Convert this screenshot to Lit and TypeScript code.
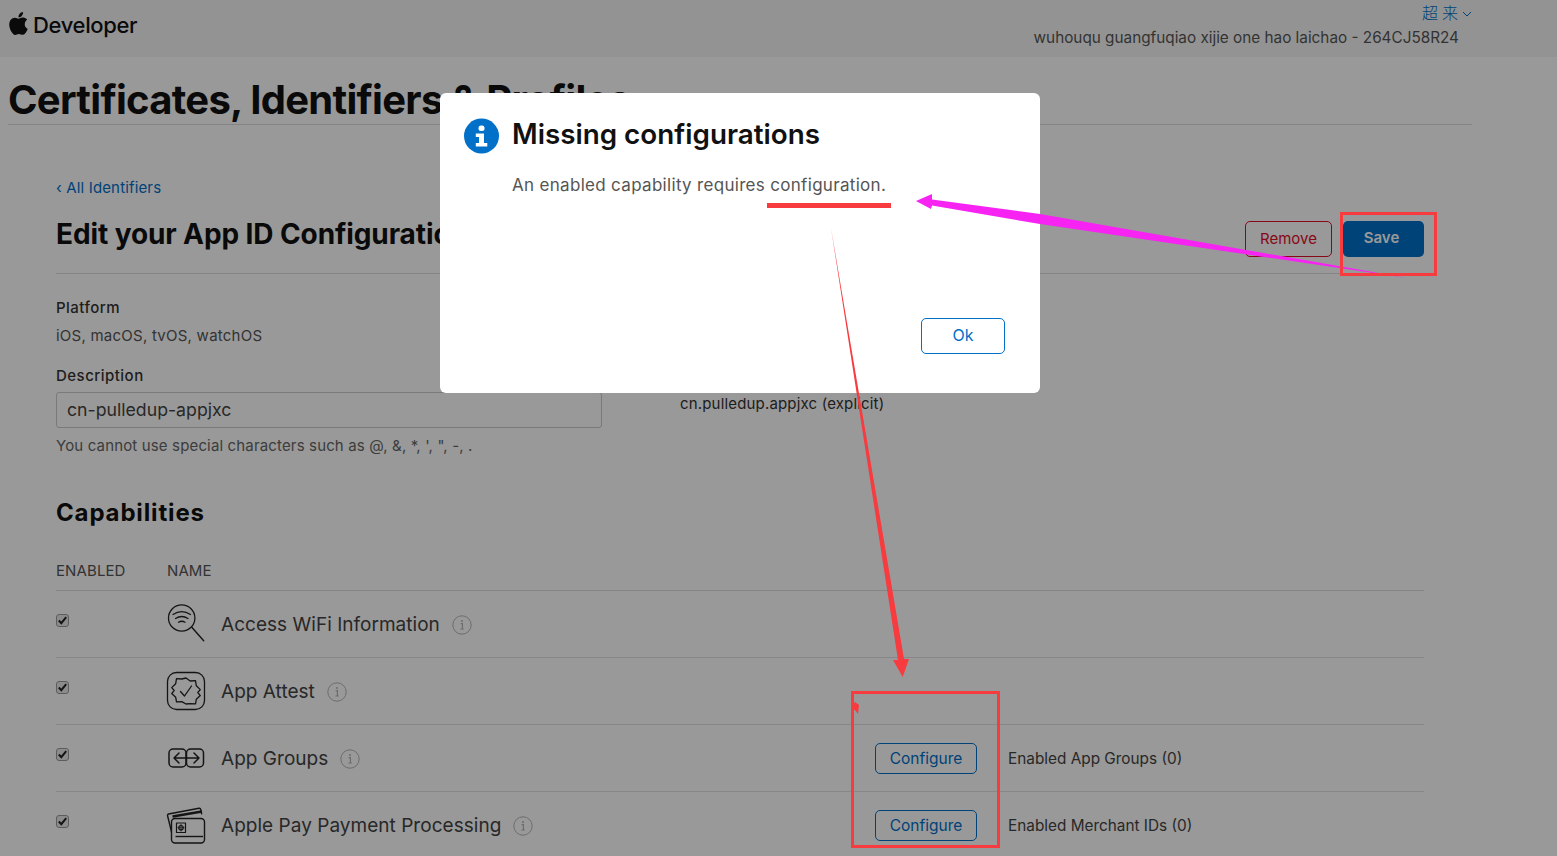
import { LitElement, html, css, svg } from "lit";
import { customElement } from "lit/decorators.js";

const info = html`<svg class="info" width="20" height="20" viewBox="0 0 20 20" fill="none" stroke="#b4b4b4"><circle cx="10" cy="10" r="9.2" stroke-width="1"/><path d="M8.6 8.6h1.8v5.2M8.4 14h3.4" stroke-width="1.2"/><circle cx="10" cy="6" r="1" fill="#b4b4b4" stroke="none"/></svg>`;

const icons = {
  wifi: html`<svg width="40" height="40" viewBox="0 0 40 40" fill="none" stroke="#222" stroke-width="1.3" stroke-linecap="round"><circle cx="15.7" cy="14" r="13.2"/><path d="M26 23.500 37.700 36.700" stroke-width="1.400"/><path d="M7 10.500c5.500-3.600 12-3.600 17.500 0M9.500 14.500c4-2.600 8.500-2.600 12.500 0M12.500 18.200c2-1.200 4.500-1.200 6.500 0"/></svg>`,
  attest: html`<svg width="40" height="40" viewBox="0 0 40 40" fill="none" stroke="#222" stroke-width="1.300" stroke-linejoin="round" stroke-linecap="round"><rect x="1.500" y="1.500" width="37" height="37" rx="9"/><path d="M20 7l4.200 3 5.300-.3.800 5 4 3.900-2.500 2.900 2.500 3.100-4 3.700-.8 4.500-5.300-.2L20 33l-4.200-2.400-5.300.2-.8-4.500-4-3.700 2.500-3.100-2.500-2.900 4-3.900.8-5 5.300.3z"/><path d="M14.500 20.500l4 4.500 7-10"/></svg>`,
  groups: html`<svg width="40" height="40" viewBox="0 0 40 40" fill="none" stroke="#222" stroke-width="1.500" stroke-linejoin="round" stroke-linecap="round"><rect x="3" y="11" width="17" height="18" rx="4"/><rect x="20.500" y="11" width="17" height="18" rx="4"/><path d="M8 20H33M13 15l-5 5 5 5M28 15l5 5-5 5"/></svg>`,
  pay: html`<svg width="40" height="40" viewBox="0 0 40 40" fill="none" stroke="#222" stroke-width="1.400" stroke-linejoin="round"><path d="M7 33 1.500 10.500c0-.8.300-1.300 1-1.500L33 3.300c1-.2 1.500.2 1.700 1l1 5"/><path d="M6.500 11.500 36 6.500" stroke-width="2.600"/><rect x="5.500" y="13.500" width="33" height="24.500" rx="3.500" fill="#fff"/><path d="M9.500 31.500H37"/><rect x="10.500" y="18" width="9" height="9.500" stroke-width="1.200"/><circle cx="15" cy="22.700" r="2.200" stroke-width="1.200"/><path d="M15 19v7.500M11.500 22.700h7" stroke-width=".8"/></svg>`,
};

const rows = [
  { icon: icons.wifi, name: "Access WiFi Information" },
  { icon: icons.attest, name: "App Attest" },
  { icon: icons.groups, name: "App Groups", note: "Enabled App Groups (0)" },
  { icon: icons.pay, name: "Apple Pay Payment Processing", note: "Enabled Merchant IDs (0)" },
];

@customElement("app-root")
export class AppRoot extends LitElement {
  static styles = css`
    :host { display: block; position: relative; height: 856px; overflow: hidden; background: #fff; font-family: Inter, "Noto Sans", sans-serif; color: #333; }
    .top { height: 57px; background: #f6f6f6; display: flex; justify-content: space-between; padding: 0 98px 0 9px; box-sizing: border-box; }
    .brand { display: flex; align-items: center; gap: 5px; height: 50px; font-size: 22px; font-weight: 500; letter-spacing: -0.35px; color: #111; }
    .brand svg { margin-top: -3px; }
    .account { text-align: right; display: flex; flex-direction: column; align-items: flex-end; padding-top: 2px; }
    .user { font-family: "Noto Sans CJK SC", sans-serif; font-size: 16px; line-height: 20px; font-weight: 300; color: #0070c9; letter-spacing: 4px; margin-right: -13px; display: flex; align-items: center; }
    .user svg { margin: 3px 0 0 0; }
    .team { font-size: 15.300px; line-height: 22px; margin-top: 5px; color: #555; }
    .title-wrap { margin: 0 85px 0 8px; height: 68px; border-bottom: 1px solid #dcdcdc; box-sizing: border-box; }
    h1 { margin: 0; padding-top: 18px; font-size: 40px; line-height: 49px; font-weight: 700; letter-spacing: -0.72px; color: #111; white-space: nowrap; }
    .content { padding: 0 133px 0 56px; }
    .back { display: block; margin-top: 53px; font-size: 15px; line-height: 20px; letter-spacing: .15px; color: #0070c9; }
    .edit { display: flex; justify-content: space-between; align-items: flex-start; height: 74px; margin-top: 2px; border-bottom: 1px solid #dcdcdc; box-sizing: border-box; padding-top: 17px; }
    h2 { margin: 0; font-size: 28px; font-weight: 700; color: #111; line-height: 34px; white-space: nowrap; letter-spacing: -.1px; }
    .actions { display: flex; gap: 11px; margin-top: 4px; }
    button { font-family: inherit; box-sizing: border-box; border-radius: 5px; background: #fff; cursor: pointer; padding: 0; }
    .remove { width: 87px; height: 36px; border: 1px solid #e30d2a; color: #e30d2a; font-size: 15px; padding-bottom: 2px; }
    .save { width: 81px; height: 36px; border: 0; background: #0070c9; color: #fff; font-size: 15px; font-weight: 600; padding: 0 4px 3px 0; }
    .details { display: flex; margin-top: 24px; }
    .left { width: 546px; }
    .label { font-size: 15px; line-height: 20px; font-weight: 500; color: #333; letter-spacing: .48px; }
    .val { font-size: 15px; line-height: 20px; margin-top: 8px; color: #555; letter-spacing: .24px; }
    .label.d { margin-top: 20px; }
    .input { height: 36px; box-sizing: border-box; margin-top: 6px; border: 1px solid #ccc; border-radius: 3px; padding: 0 10px; font-size: 17.700px; line-height: 34px; color: #444; }
    .hint { font-size: 15px; line-height: 20px; margin-top: 8px; color: #666; letter-spacing: .15px; }
    .right { margin-left: 78px; padding-top: 68px; font-size: 15px; line-height: 20px; color: #333; white-space: nowrap; letter-spacing: .17px; }
    .right .h { font-weight: 500; margin-bottom: 8px; }
    h3 { margin: 41px 0 0; font-size: 24px; line-height: 32px; font-weight: 700; color: #111; letter-spacing: .85px; }
    .thead { display: flex; margin-top: 32px; height: 29px; font-size: 15px; line-height: 20px; color: #555; border-bottom: 1px solid #dcdcdc; letter-spacing: .1px; }
    .thead .en { width: 111px; }
    .row { display: flex; align-items: center; height: 67px; box-sizing: border-box; border-bottom: 1px solid #e2e2e2; }
    .check { width: 13px; height: 13px; box-sizing: border-box; border: 1px solid #999; border-radius: 3px; background: #e8e8e8; margin-top: -7px; display: flex; align-items: center; justify-content: center; }
    .ic { display: block; margin-left: 97px; width: 40px; height: 40px; }
    .name { margin-left: 15px; font-size: 19px; letter-spacing: .03px; color: #444; white-space: nowrap; }
    .info { margin-left: 12px; margin-top: 1px; flex: none; }
    .grow { flex: 1; }
    .conf-cell { width: 549px; display: flex; align-items: center; box-sizing: border-box; }
    .conf { width: 102px; height: 31px; border: 1px solid #0070c9; color: #0070c9; font-size: 15.500px; }
    .note { margin-left: 31px; font-size: 15.350px; color: #444; white-space: nowrap; }
    .scrim { position: absolute; inset: 0; background: rgba(0, 0, 0, 0.4); }
    .modal { position: absolute; left: 440px; top: 93px; width: 600px; height: 300px; background: #fff; border-radius: 6px; box-sizing: border-box; }
    .m-head { display: flex; align-items: flex-start; gap: 13px; padding: 25px 0 0 24px; }
    .m-title { margin-top: -1px; font-size: 27.800px; line-height: 34px; font-weight: 600; color: #111; white-space: nowrap; }
    .m-body { margin: 19px 0 0 72px; font-size: 17px; line-height: 24px; color: #555; letter-spacing: .31px; }
    .m-foot { position: absolute; right: 35px; bottom: 39px; }
    .ok { width: 84px; height: 36px; border: 1px solid #0070c9; color: #0070c9; font-size: 16px; padding-bottom: 3px; }
    .marks { position: absolute; left: 0; top: 0; pointer-events: none; }
  `;

  render() {
    return html`
      <header class="top">
        <div class="brand">
          <svg width="19" height="23" viewBox="2 0 20 24" fill="#111"><path d="M12.152 6.896c-.948 0-2.415-1.078-3.960-1.040-2.040.027-3.910 1.183-4.961 3.014-2.117 3.675-.546 9.103 1.519 12.090 1.013 1.454 2.208 3.090 3.792 3.039 1.520-.065 2.090-.987 3.935-.987 1.831 0 2.350.987 3.960.948 1.637-.026 2.676-1.480 3.676-2.948 1.156-1.688 1.636-3.325 1.662-3.415-.039-.013-3.182-1.221-3.220-4.857-.026-3.040 2.480-4.494 2.597-4.559-1.429-2.090-3.623-2.324-4.390-2.376-2-.156-3.675 1.090-4.610 1.090zM15.530 3.830c.843-1.012 1.400-2.427 1.245-3.830-1.207.052-2.662.805-3.532 1.818-.780.896-1.454 2.338-1.273 3.714 1.338.104 2.715-.688 3.559-1.701"/></svg>
          <span>Developer</span>
        </div>
        <div class="account">
          <div class="user">超来<svg width="10" height="6" viewBox="0 0 10 6" fill="none" stroke="#0070c9"><path d="M1 1l4 4 4-4"/></svg></div>
          <div class="team">wuhouqu guangfuqiao xijie one hao laichao - 264CJ58R24</div>
        </div>
      </header>
      <div class="title-wrap"><h1>Certificates, Identifiers &amp; Profiles</h1></div>
      <main class="content">
        <a class="back">‹ All Identifiers</a>
        <div class="edit">
          <h2>Edit your App ID Configuration</h2>
          <div class="actions"><button class="remove">Remove</button><button class="save">Save</button></div>
        </div>
        <div class="details">
          <div class="left">
            <div class="label">Platform</div>
            <div class="val">iOS, macOS, tvOS, watchOS</div>
            <div class="label d">Description</div>
            <div class="input">cn-pulledup-appjxc</div>
            <div class="hint">You cannot use special characters such as @, &amp;, *, ', ", -, .</div>
          </div>
          <div class="right"><div class="h">Bundle ID</div><div>cn.pulledup.appjxc (explicit)</div></div>
        </div>
        <h3>Capabilities</h3>
        <div class="thead"><span class="en">ENABLED</span><span>NAME</span></div>
        ${rows.map(
          (r) => html`<div class="row">
            <span class="check"><svg width="9" height="9" viewBox="0 0 9 9" fill="none" stroke="#222" stroke-width="2"><path d="M.8 4.500l2.500 2.700L8.200 1.200"/></svg></span>
            <span class="ic">${r.icon}</span>
            <span class="name">${r.name}</span>
            ${info}
            <span class="grow"></span>
            <div class="conf-cell">
              ${r.note ? html`<button class="conf">Configure</button><span class="note">${r.note}</span>` : ""}
            </div>
          </div>`
        )}
      </main>
      <div class="scrim"></div>
      <section class="modal">
        <div class="m-head">
          <svg width="35" height="36" viewBox="0 0 35 36"><circle cx="17.500" cy="18" r="17.500" fill="#0070c9"/><rect x="14.500" y="7.500" width="6" height="5.500" rx="2.500" fill="#fff"/><path d="M11.800 15.500h8.200v9.500h3.300v3.500H11.800V25H15v-6h-3.200z" fill="#fff"/></svg>
          <span class="m-title">Missing configurations</span>
        </div>
        <div class="m-body">An enabled capability requires configuration.</div>
        <div class="m-foot"><button class="ok">Ok</button></div>
      </section>
      <svg class="marks" width="1557" height="856" viewBox="0 0 1557 856">
        ${svg`
          <rect x="767" y="203" width="124" height="5" fill="#f73b3f"/>
          <path d="M916 201 932 194 932 199.500 1040 214 1407 278 1040 224 932 205.500 931 209z" fill="#f623f2"/>
          <path d="M831 228 904 659 909 659 902.700 677 893 660 898 660z" fill="#f73b3f"/>
          <path d="M855 702l4 3-1 9-3-4-4 0 2-6z" fill="#f73b3f"/>
          <rect x="1341.500" y="213.500" width="94" height="61" fill="none" stroke="#f73b3f" stroke-width="3"/>
          <rect x="852.500" y="692.500" width="146" height="154" fill="none" stroke="#f73b3f" stroke-width="3"/>
        `}
      </svg>
    `;
  }
}
